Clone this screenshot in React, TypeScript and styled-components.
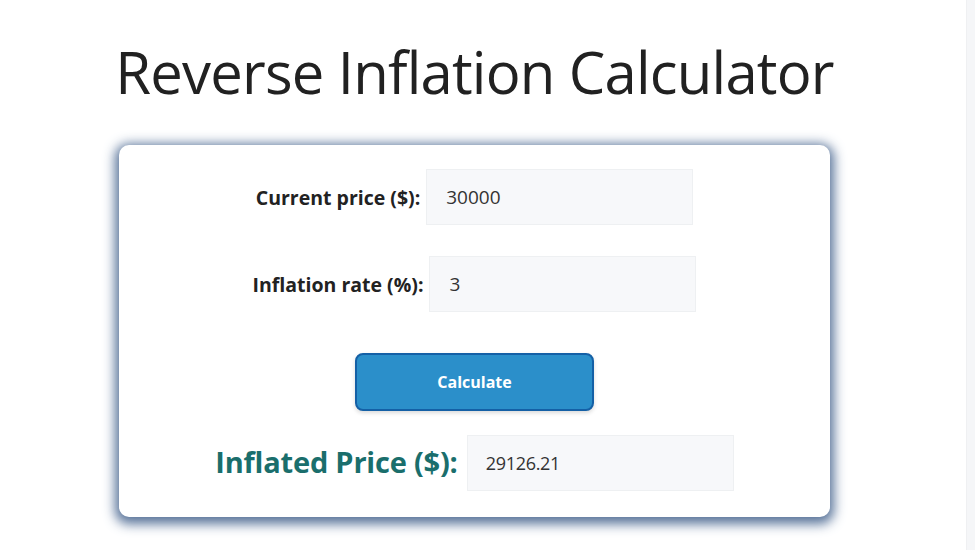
import React, { useState } from 'react'
import styled, { createGlobalStyle } from 'styled-components';

const GlobalStyle = createGlobalStyle`
  html, body {
    margin: 0;
    padding: 0;
    background: #ffffff;
    font-family: "Open Sans", "Noto Sans", sans-serif;
    color: #212529;
  }
`;

const Page = styled.div`
  display: flex;
  width: 975px;
  height: 550px;
  overflow: hidden;
`;

const Main = styled.div`
  flex: 0 0 949px;
  display: flex;
  flex-direction: column;
  align-items: center;
`;

const Gutter = styled.div`
  flex: 1;
`;

const ScrollStrip = styled.div`
  flex: 0 0 8px;
  background-color: #f5f6f8;
  border-left: 1px solid #eff0f2;
`;

const Title = styled.h1`
  margin: 30px 0 0 0;
  font-size: 58px;
  font-weight: 400;
  line-height: 84px;
  letter-spacing: -0.8px;
  color: #212121;
`;

const Card = styled.div`
  width: 711px;
  margin-top: 31px;
  box-sizing: border-box;
  padding: 24px 0 26px 0;
  background-color: #ffffff;
  border-radius: 10px;
  box-shadow: 0 3px 12px 4px rgba(70, 100, 142, 0.9);
  display: flex;
  flex-direction: column;
  align-items: center;
`;

const Row = styled.div<{ $gap: number }>`
  display: flex;
  align-items: center;
  gap: ${p => p.$gap}px;
`;

const Label = styled.label`
  font-size: 19.5px;
  font-weight: 700;
  color: #222222;
`;

const ResultLabel = styled.label`
  font-size: 29px;
  font-weight: 700;
  color: #1a6e6c;
  letter-spacing: -0.2px;
  margin-top: -4px;
`;

const Input = styled.input<{ $result?: boolean }>`
  width: 267px;
  height: 56px;
  box-sizing: border-box;
  padding: 0 0 0 ${p => (p.$result ? 18 : 19)}px;
  border: 1px solid #eef0f2;
  background-color: #f7f8fa;
  font-family: "Open Sans", "Noto Sans", sans-serif;
  font-size: ${p => (p.$result ? 18 : 19)}px;
  letter-spacing: ${p => (p.$result ? -0.3 : 0)}px;
  color: #333333;
  outline: none;
`;

const Spacer = styled.div<{ $h: number }>`
  height: ${p => p.$h}px;
`;

const CalcButton = styled.button`
  width: 239px;
  height: 58px;
  border: 2px solid #1460a6;
  border-radius: 8px;
  background-color: #2b8fca;
  color: #ffffff;
  font-family: "Open Sans", "Noto Sans", sans-serif;
  font-size: 16px;
  font-weight: 700;
  box-shadow: 0 2px 4px rgba(0, 0, 0, 0.15);
  cursor: pointer;
`;

export default function App() {
  const [price, setPrice] = useState('30000');
  const [rate, setRate] = useState('3');
  const [result, setResult] = useState('29126.21');

  const calculate = () => {
    const p = Number(price);
    const r = Number(rate);
    setResult((p / (1 + r / 100)).toFixed(2));
  }

  return (
    <>
      <GlobalStyle />
      <Page>
        <Main>
          <Title>Reverse Inflation Calculator</Title>
          <Card>
            <Row $gap={6}>
              <Label>Current price ($):</Label>
              <Input value={price} onChange={e => setPrice(e.target.value)} />
            </Row>
            <Spacer $h={31} />
            <Row $gap={6}>
              <Label>Inflation rate (%):</Label>
              <Input value={rate} onChange={e => setRate(e.target.value)} />
            </Row>
            <Spacer $h={41} />
            <CalcButton onClick={calculate}>Calculate</CalcButton>
            <Spacer $h={24} />
            <Row $gap={9}>
              <ResultLabel>Inflated Price ($):</ResultLabel>
              <Input $result readOnly value={result} />
            </Row>
          </Card>
        </Main>
        <Gutter />
        <ScrollStrip />
      </Page>
    </>
  )
}
